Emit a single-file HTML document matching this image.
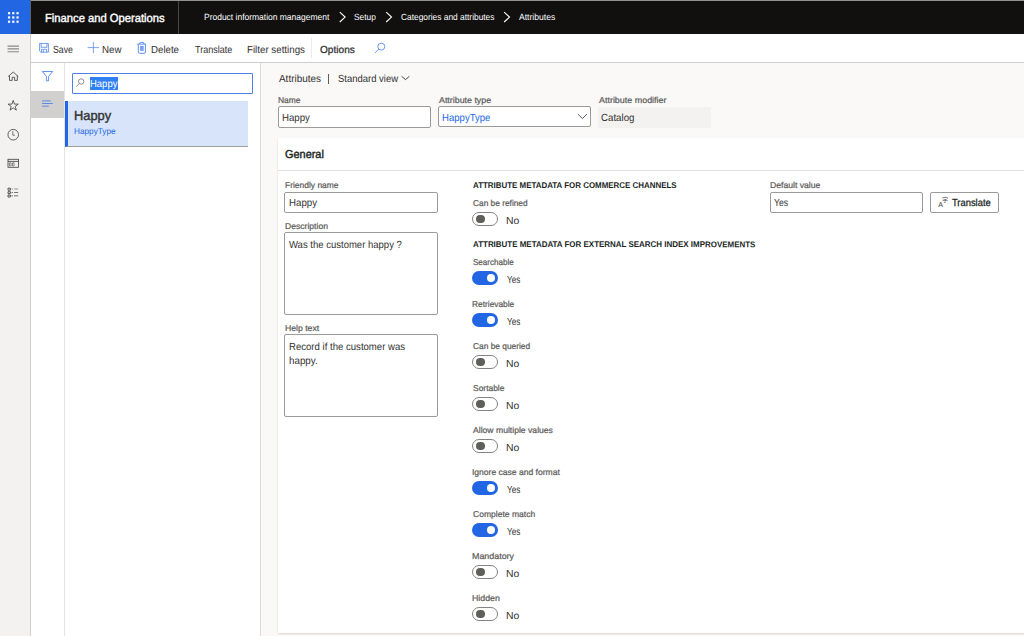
<!DOCTYPE html>
<html lang="en">
<head>
<meta charset="utf-8">
<title>Attributes - Finance and Operations</title>
<style>
*{box-sizing:border-box;margin:0;padding:0}
html,body{width:1024px;height:636px;overflow:hidden;background:#faf9f8;font-family:"Liberation Sans",sans-serif;color:#323130}
body{position:relative}
.a{position:absolute}
.t{position:absolute;display:block;white-space:nowrap;line-height:1;transform-origin:0 0}
.t.st{-webkit-text-stroke:0}
.t.sl{-webkit-text-stroke:.24px currentColor}
.t.sb{-webkit-text-stroke:.26px currentColor}
.t.sh{-webkit-text-stroke:.4px currentColor}
#header{left:0;top:0;width:1024px;height:34px;background:#11100f}
#topline{left:0;top:0;width:1024px;height:1px;background:rgba(255,255,255,.55)}
#waffle{left:0;top:0;width:30px;height:34px;background:#2266e3}
#wline{left:30px;top:0;width:1px;height:34px;background:#5a6069}
#hsep{left:178px;top:1px;width:1px;height:33px;background:#484644}
#leftnav{left:0;top:34px;width:31px;height:602px;background:#f3f2f1;border-right:1px solid #d0cecc}
#toolbar{left:31px;top:34px;width:993px;height:29px;background:#fff;border-bottom:1px solid #cfcdcb}
#tbdiv{left:311px;top:38px;width:1px;height:20px;background:#edebe9}
#sidecol{left:31px;top:63px;width:33px;height:573px;background:#fff}
#sidesel{left:31px;top:91px;width:33px;height:27px;background:#d2d0ce}
#listpane{left:64px;top:63px;width:197px;height:573px;background:#fff;border-left:1px solid #e5e3e1;border-right:1px solid #dbd9d7}
#search{left:72px;top:73px;width:181px;height:21px;border:1px solid #4a82ea;background:#fff;border-radius:1px}
#searchsel{left:90px;top:77px;width:28px;height:13px;background:#2f80f5}
#item{left:65px;top:101px;width:183px;height:46px;background:#d8e4fa;border-left:3px solid #2266e3;border-bottom:1px solid #a19f9d}
#main{left:261px;top:63px;width:763px;height:573px;background:#faf9f8}
.inp{position:absolute;border:1px solid #9c9a98;background:#fff;border-radius:2px}
#card{left:278px;top:138px;width:760px;height:495px;background:#fff;box-shadow:0 .6px 1.8px rgba(0,0,0,.15)}
#cardhr{left:278px;top:170px;width:746px;height:1px;background:#e1dfdd}
.tog{position:absolute;left:472px;width:26px;height:14px;border-radius:7px}
.tog.off{border:1px solid #858381;background:#fff}
.tog.on{background:#2266e3}
.tog i{position:absolute;width:8.5px;height:8.5px;border-radius:50%}
.tog.off i{left:3.4px;top:1.6px;background:#605e5c}
.tog.on i{left:14.8px;top:2.8px;background:#fff}
</style>
</head>
<body>
<header>
<div class="a" id="header"></div>
<div class="a" id="topline"></div>
<div class="a" id="waffle"></div>
<div class="a" id="wline"></div>
<div class="a" id="hsep"></div>
<span class="t sh" style="left:45.34px;top:13px;font-size:11.8px;color:#ffffff;transform:scaleX(0.9504) rotate(.03deg)">Finance and Operations</span>
<span class="t st" style="left:204.19px;top:13px;font-size:9px;color:#ffffff;transform:scaleX(0.9414) rotate(.03deg)">Product information management</span>
<span class="t st" style="left:354.44px;top:13px;font-size:9px;color:#ffffff;transform:scaleX(0.9282) rotate(.03deg)">Setup</span>
<span class="t st" style="left:400.74px;top:13px;font-size:9px;color:#ffffff;transform:scaleX(0.9293) rotate(.03deg)">Categories and attributes</span>
<span class="t st" style="left:519.40px;top:13px;font-size:9px;color:#ffffff;transform:scaleX(0.9536) rotate(.03deg)">Attributes</span>
</header>
<nav><div class="a" id="leftnav"></div></nav>
<div role="toolbar">
<div class="a" id="toolbar"></div>
<div class="a" id="tbdiv"></div>
<span class="t" style="left:53.08px;top:45px;font-size:10.3px;color:#323130;transform:scaleX(0.8489) rotate(.03deg)">Save</span>
<span class="t" style="left:102.08px;top:45px;font-size:10.3px;color:#323130;transform:scaleX(0.9418) rotate(.03deg)">New</span>
<span class="t" style="left:150.58px;top:45px;font-size:10.3px;color:#323130;transform:scaleX(0.9410) rotate(.03deg)">Delete</span>
<span class="t" style="left:194.58px;top:45px;font-size:10.3px;color:#323130;transform:scaleX(0.8764) rotate(.03deg)">Translate</span>
<span class="t" style="left:246.77px;top:45px;font-size:10.3px;color:#323130;transform:scaleX(0.9467) rotate(.03deg)">Filter settings</span>
<span class="t sb" style="left:320.03px;top:45px;font-size:10.2px;color:#323130;transform:scaleX(0.9910) rotate(.03deg)">Options</span>
</div>
<aside>
<div class="a" id="sidecol"></div>
<div class="a" id="sidesel"></div>
<div class="a" id="listpane"></div>
<div class="a" id="search"></div>
<div class="a" id="searchsel"></div>
<div class="a" id="item"></div>
<span class="t" style="left:90.09px;top:79px;font-size:10.3px;color:#ffffff;transform:scaleX(0.9212) rotate(.03deg)">Happy</span>
<span class="t sh" style="left:73.70px;top:109px;font-size:13.2px;color:#323130;transform:scaleX(0.9733) rotate(.03deg)">Happy</span>
<span class="t" style="left:73.87px;top:127px;font-size:8.5px;color:#2266e3;transform:scaleX(0.9672) rotate(.03deg)">HappyType</span>
</aside>
<main>
<div class="a" id="main"></div>
<div class="a" id="card"></div>
<div class="a" id="cardhr"></div>
<div class="inp" style="left:278px;top:106px;width:153px;height:22px"></div>
<div class="inp" style="left:438px;top:106px;width:153px;height:21px"></div>
<div class="a" style="left:598px;top:107px;width:113px;height:21px;background:#f3f2f1"></div>
<div class="inp" style="left:284px;top:192px;width:154px;height:21px"></div>
<div class="inp" style="left:284px;top:232px;width:154px;height:83px"></div>
<div class="inp" style="left:284px;top:334px;width:154px;height:83px"></div>
<div class="inp" style="left:770px;top:192px;width:153px;height:21px"></div>
<div class="inp" style="left:930px;top:192px;width:69px;height:21px"></div>
<div class="a" style="left:328px;top:74px;width:1px;height:10px;background:#605e5c"></div>
<div class="tog off" style="top:212px"><i></i></div>
<div class="tog on" style="top:271px"><i></i></div>
<div class="tog on" style="top:313px"><i></i></div>
<div class="tog off" style="top:355px"><i></i></div>
<div class="tog off" style="top:397px"><i></i></div>
<div class="tog off" style="top:439px"><i></i></div>
<div class="tog on" style="top:481px"><i></i></div>
<div class="tog on" style="top:523px"><i></i></div>
<div class="tog off" style="top:565px"><i></i></div>
<div class="tog off" style="top:607px"><i></i></div>
<span class="t" style="left:278.88px;top:74px;font-size:10.3px;color:#323130;transform:scaleX(0.9651) rotate(.03deg)">Attributes</span>
<span class="t" style="left:337.64px;top:74px;font-size:10.3px;color:#323130;transform:scaleX(0.9205) rotate(.03deg)">Standard view</span>
<span class="t sl" style="left:277.87px;top:96px;font-size:8.5px;color:#605e5c;transform:scaleX(0.9936) rotate(.03deg)">Name</span>
<span class="t sl" style="left:438.52px;top:96px;font-size:8.5px;color:#605e5c;transform:scaleX(1.0402) rotate(.03deg)">Attribute type</span>
<span class="t sl" style="left:598.53px;top:96px;font-size:8.5px;color:#605e5c;transform:scaleX(1.0503) rotate(.03deg)">Attribute modifier</span>
<span class="t" style="left:281.98px;top:113px;font-size:10.3px;color:#323130;transform:scaleX(0.9385) rotate(.03deg)">Happy</span>
<span class="t" style="left:441.89px;top:113px;font-size:10.3px;color:#2266e3;transform:scaleX(0.9300) rotate(.03deg)">HappyType</span>
<span class="t" style="left:601.43px;top:113px;font-size:10.3px;color:#323130;transform:scaleX(0.9425) rotate(.03deg)">Catalog</span>
<span class="t sh" style="left:284.90px;top:149px;font-size:11.5px;color:#201f1e;transform:scaleX(0.9499) rotate(.03deg)">General</span>
<span class="t sl" style="left:284.67px;top:181px;font-size:8.5px;color:#605e5c;transform:scaleX(0.9945) rotate(.03deg)">Friendly name</span>
<span class="t" style="left:288.88px;top:198px;font-size:10.3px;color:#323130;transform:scaleX(0.9420) rotate(.03deg)">Happy</span>
<span class="t sl" style="left:284.86px;top:222px;font-size:8.5px;color:#605e5c;transform:scaleX(1.0099) rotate(.03deg)">Description</span>
<span class="t" style="left:289.38px;top:240px;font-size:10.3px;color:#323130;transform:scaleX(0.9242) rotate(.03deg)">Was the customer happy ?</span>
<span class="t sl" style="left:284.86px;top:324px;font-size:8.5px;color:#605e5c;transform:scaleX(1.0185) rotate(.03deg)">Help text</span>
<span class="t" style="left:289.19px;top:342px;font-size:10.3px;color:#323130;transform:scaleX(0.9304) rotate(.03deg)">Record if the customer was</span>
<span class="t" style="left:289.29px;top:356px;font-size:10.3px;color:#323130;transform:scaleX(0.9509) rotate(.03deg)">happy.</span>
<span class="t" style="left:472.86px;top:181px;font-size:8.4px;font-weight:bold;color:#201f1e;transform:scaleX(0.9474) rotate(.03deg)">ATTRIBUTE METADATA FOR COMMERCE CHANNELS</span>
<span class="t sl" style="left:472.85px;top:199px;font-size:8.5px;color:#605e5c;transform:scaleX(0.9798) rotate(.03deg)">Can be refined</span>
<span class="t" style="left:472.86px;top:240px;font-size:8.4px;font-weight:bold;color:#201f1e;transform:scaleX(0.9503) rotate(.03deg)">ATTRIBUTE METADATA FOR EXTERNAL SEARCH INDEX IMPROVEMENTS</span>
<span class="t" style="left:505.92px;top:216px;font-size:10.3px;color:#323130;transform:scaleX(1.0105) rotate(.03deg)">No</span>
<span class="t sl" style="left:472.86px;top:258px;font-size:8.5px;color:#605e5c;transform:scaleX(0.9461) rotate(.03deg)">Searchable</span>
<span class="t" style="left:506.60px;top:275px;font-size:10.3px;color:#323130;transform:scaleX(0.7938) rotate(.03deg)">Yes</span>
<span class="t sl" style="left:472.48px;top:300px;font-size:8.5px;color:#605e5c;transform:scaleX(0.9830) rotate(.03deg)">Retrievable</span>
<span class="t" style="left:506.60px;top:317px;font-size:10.3px;color:#323130;transform:scaleX(0.7938) rotate(.03deg)">Yes</span>
<span class="t sl" style="left:472.85px;top:342px;font-size:8.5px;color:#605e5c;transform:scaleX(0.9828) rotate(.03deg)">Can be queried</span>
<span class="t" style="left:505.92px;top:359px;font-size:10.3px;color:#323130;transform:scaleX(1.0105) rotate(.03deg)">No</span>
<span class="t sl" style="left:472.85px;top:384px;font-size:8.5px;color:#605e5c;transform:scaleX(0.9931) rotate(.03deg)">Sortable</span>
<span class="t" style="left:505.92px;top:401px;font-size:10.3px;color:#323130;transform:scaleX(1.0105) rotate(.03deg)">No</span>
<span class="t sl" style="left:473.22px;top:426px;font-size:8.5px;color:#605e5c;transform:scaleX(1.0131) rotate(.03deg)">Allow multiple values</span>
<span class="t" style="left:505.92px;top:443px;font-size:10.3px;color:#323130;transform:scaleX(1.0105) rotate(.03deg)">No</span>
<span class="t sl" style="left:472.47px;top:468px;font-size:8.5px;color:#605e5c;transform:scaleX(1.0039) rotate(.03deg)">Ignore case and format</span>
<span class="t" style="left:506.60px;top:485px;font-size:10.3px;color:#323130;transform:scaleX(0.7938) rotate(.03deg)">Yes</span>
<span class="t sl" style="left:472.84px;top:510px;font-size:8.5px;color:#605e5c;transform:scaleX(1.0042) rotate(.03deg)">Complete match</span>
<span class="t" style="left:506.60px;top:527px;font-size:10.3px;color:#323130;transform:scaleX(0.7938) rotate(.03deg)">Yes</span>
<span class="t sl" style="left:472.44px;top:552px;font-size:8.5px;color:#605e5c;transform:scaleX(1.0451) rotate(.03deg)">Mandatory</span>
<span class="t" style="left:505.92px;top:569px;font-size:10.3px;color:#323130;transform:scaleX(1.0105) rotate(.03deg)">No</span>
<span class="t sl" style="left:472.45px;top:594px;font-size:8.5px;color:#605e5c;transform:scaleX(1.0361) rotate(.03deg)">Hidden</span>
<span class="t" style="left:505.92px;top:611px;font-size:10.3px;color:#323130;transform:scaleX(1.0105) rotate(.03deg)">No</span>
<span class="t sl" style="left:769.76px;top:181px;font-size:8.5px;color:#605e5c;transform:scaleX(1.0156) rotate(.03deg)">Default value</span>
<span class="t" style="left:774.49px;top:198px;font-size:10.3px;color:#323130;transform:scaleX(0.8372) rotate(.03deg)">Yes</span>
<span class="t sb" style="left:952.49px;top:198px;font-size:10.2px;color:#201f1e;transform:scaleX(0.9199) rotate(.03deg)">Translate</span>
</main>

<!-- icons -->
<svg class="a" style="left:0;top:0" width="1024" height="636" viewBox="0 0 1024 636" fill="none">
<!-- waffle dots -->
<g fill="#fff"><rect x="7.95" y="12.1" width="2.2" height="2.2"/><rect x="12.2" y="12.1" width="2.2" height="2.2"/><rect x="16.45" y="12.1" width="2.2" height="2.2"/><rect x="7.95" y="16.35" width="2.2" height="2.2"/><rect x="12.2" y="16.35" width="2.2" height="2.2"/><rect x="16.45" y="16.35" width="2.2" height="2.2"/><rect x="7.95" y="20.6" width="2.2" height="2.2"/><rect x="12.2" y="20.6" width="2.2" height="2.2"/><rect x="16.45" y="20.6" width="2.2" height="2.2"/></g>
<!-- breadcrumb chevrons -->
<g stroke="#fff" stroke-width="1.1">
<path d="M339.8 12.2 L345.1 17.1 L339.8 22"/><path d="M386.2 12.2 L391.5 17.1 L386.2 22"/><path d="M504.1 12.2 L509.5 17.1 L504.1 22"/>
</g>
<!-- hamburger -->
<g stroke="#8a8886" stroke-width="1.1"><path d="M7.5 46.1H19M7.5 48.9H19M7.5 51.7H19"/></g>
<!-- home -->
<g stroke="#484644" stroke-width=".85">
<path d="M8.1 76.6 L13.2 72 L18.3 76.6 M9.5 75.6 V80.4 H12.2 V77.3 H14.6 V80.4 H17.3 V75.6"/>
<!-- star -->
<path d="M13.20 100.40 L14.43 104.10 L18.34 104.13 L15.20 106.45 L16.37 110.17 L13.20 107.90 L10.03 110.17 L11.20 106.45 L8.06 104.13 L11.97 104.10 Z" stroke-linejoin="miter"/>
<!-- clock -->
<circle cx="13.25" cy="134.7" r="5.3"/><path d="M12.8 131.2 V135.2 H14.9" stroke="#605e5c"/>
<!-- workspace -->
<rect x="8" y="159.3" width="10.5" height="8"/><path d="M8 161.4 H18.5"/><path d="M9.5 162.8 H11.1 V165.9 H9.5 Z M12.5 162.8 H14.1 V165.9 H12.5 Z" stroke-width=".7" stroke="#605e5c"/>
<!-- list -->
<path d="M8 188.2 H10.4 V190.2 H8 Z M8 191.7 H10.4 V193.6 H8 Z M8 195 H10.4 V197 H8 Z" stroke-width=".9"/>
<path d="M11.5 189 H13 M14 189 H18.2" stroke="#8a8886"/><path d="M11.5 192.5 H13 M14 192.5 H18.2 M11.5 195.8 H13 M14 195.8 H18.2" stroke="#605e5c"/>
</g>
<!-- toolbar icons (blue) -->
<g stroke="#4f86ea" stroke-width=".9">
<!-- save -->
<g stroke-width=".8"><path d="M39.6 43.4 H48.4 V52.2 H40.8 L39.6 51 Z"/><path d="M41.2 43.4 V47.3 H47 V43.4"/><path d="M41.5 52.2 V49.3 H46.6 V52.2 M43.1 52.2 V50.8 H44.1"/></g>
<!-- plus -->
<path d="M87.6 47.6 H99 M93.4 42 V53.2" stroke="#5a8def" stroke-width=".8"/>
<!-- trash -->
<path d="M137.2 44.1 H146 M139.9 44.1 V43.2 Q139.9 42.4 140.7 42.4 H142.9 Q143.7 42.4 143.7 43.2 V44.1 M138.3 44.1 V52.1 Q138.3 53.3 139.5 53.3 H144.2 Q145.4 53.3 145.4 52.1 V44.1"/>
<rect x="140.1" y="45.9" width="3.6" height="5" fill="#7d9ff1" stroke="none"/>
<!-- search -->
<circle cx="381.3" cy="46.6" r="3.5" stroke="#5a8def" stroke-width=".9"/><path d="M378.8 49.1 L375 52.9" stroke="#5a8def" stroke-width=".9"/>
<!-- funnel -->
<path d="M42.3 71.5 H52.7 L48.6 76.4 V80.8 H46.4 V76.4 Z"/>
<!-- lines -->
<path d="M42 100.9 H50.8 M42 103.5 H52.8 M42 106.2 H48.8" stroke="#4c84ea"/>
</g>
<!-- search box magnifier -->
<g stroke="#7a7876" stroke-width=".85"><circle cx="81.2" cy="81.5" r="2.7"/><path d="M79.3 83.5 L76.2 86.6"/></g>
<!-- chevrons down -->
<g stroke="#323130" stroke-width=".9"><path d="M401.6 76.3 L405.5 79.6 L409.4 76.3"/></g>
<g stroke="#484644" stroke-width=".9"><path d="M577.9 114.1 L582.4 118.5 L586.9 114.1"/></g>
<!-- translate icon -->
<g fill="#484644" font-family="Liberation Sans, Noto Sans CJK SC, sans-serif">
<text x="938.3" y="206.5" font-size="7.2">A</text>
<text x="942" y="202" font-size="6.2" font-family="Liberation Sans, Noto Sans CJK SC, sans-serif">字</text>
</g>
</svg>

</body>
</html>
